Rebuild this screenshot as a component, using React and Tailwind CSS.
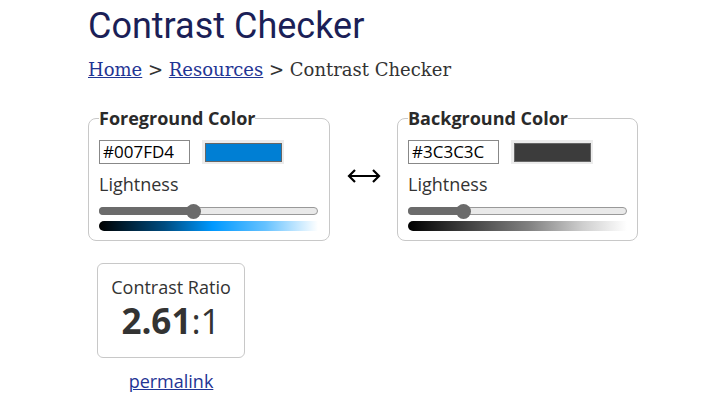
import React from "react";

function Swatch({ color }) {
  return (
    <div className="ml-[12px] flex h-[24px] w-[82px] items-center justify-center bg-[#ececec]">
      <div className="h-[19px] w-[77px] border border-[#666]" style={{ background: color }} />
    </div>
  );
}

function Slider({ pos, gradient }) {
  return (
    <div className="mt-[10px] w-[219px]">
      <div className="relative h-[10px]">
        <div className="absolute left-0 right-0 top-[1px] h-[8px] rounded-full border border-[#999] bg-[#e9e9e9]" />
        <div className="absolute left-0 top-[1px] h-[8px] rounded-l-full bg-[#6b6b6b]" style={{ width: pos }} />
        <div className="absolute top-[-2px] h-[15px] w-[15px] rounded-full bg-[#6b6b6b]" style={{ left: pos - 7 }} />
      </div>
      <div className="mt-[5px] h-[10px] rounded-l-[5px]" style={{ background: gradient }} />
    </div>
  );
}

function ColorBox({ title, hex, color, pos, gradient, wide }) {
  return (
    <fieldset
      className={
        (wide ? "w-[242px] " : "w-[241px] ") +
        "rounded-[8px] border border-[#c8c8c8] px-[10px] pb-[9px] pt-0"
      }
    >
      <legend className="px-0 text-[18px] font-bold leading-[22px] text-[#2a2a2a]">{title}</legend>
      <div className="mt-[11px] flex items-center">
        <div className="flex h-[24px] w-[91px] items-center border border-[#888] px-[3px] text-[17px] text-black">{hex}</div>
        <Swatch color={color} />
      </div>
      <div className="mt-[8px] text-[18px] leading-[24px] text-[#333]">Lightness</div>
      <Slider pos={pos} gradient={gradient} />
    </fieldset>
  );
}

export default function App() {
  return (
    <div className="min-h-[404px] w-[719px] bg-white pl-[88px] font-['Open_Sans',sans-serif]">
      <h1 className="pt-[4px] font-['Roboto',sans-serif] text-[36px] leading-[44px] text-[#1b1f57]">Contrast Checker</h1>
      <div className="mt-[10px] font-['DejaVu_Serif',serif] text-[18px] leading-[24px] text-[#333]">
        <a href="#" className="text-[#1f3594] underline">Home</a> &gt;{" "}
        <a href="#" className="text-[#1f3594] underline">Resources</a> &gt; Contrast Checker
      </div>
      <div className="mt-[25px] flex items-start">
        <ColorBox
          wide
          title="Foreground Color"
          hex="#007FD4"
          color="#007fd4"
          pos={94}
          gradient="linear-gradient(to right, #000 0%, #004c80 30%, #0099ff 52%, #66c2ff 76%, #ffffff 100%)"
        />
        <div className="flex w-[67px] justify-center pt-[61px]">
          <svg width="36" height="16" viewBox="0 0 36 16">
            <path d="M3 8 H33" stroke="#000" strokeWidth="2" />
            <path d="M9 2 L3 8 L9 14" fill="none" stroke="#000" strokeWidth="2.2" />
            <path d="M27 2 L33 8 L27 14" fill="none" stroke="#000" strokeWidth="2.2" />
          </svg>
        </div>
        <ColorBox
          title="Background Color"
          hex="#3C3C3C"
          color="#3c3c3c"
          pos={55}
          gradient="linear-gradient(to right, #000 0%, #3c3c3c 25%, #808080 55%, #cfcfcf 80%, #ffffff 100%)"
        />
      </div>
      <div className="ml-[9px] mt-[22px] w-[148px]">
        <div className="flex h-[95px] flex-col items-center rounded-[6px] border border-[#c8c8c8] pt-[11px]">
          <div className="text-[18px] leading-[24px] text-[#333]">Contrast Ratio</div>
          <div className="text-[35px] leading-[44px] text-[#333]">
            <span className="font-bold">2.61</span>:1
          </div>
        </div>
        <div className="mt-[11px] text-center text-[18px] leading-[24px]">
          <a href="#" className="text-[#1f3594] underline">permalink</a>
        </div>
      </div>
    </div>
  );
}
